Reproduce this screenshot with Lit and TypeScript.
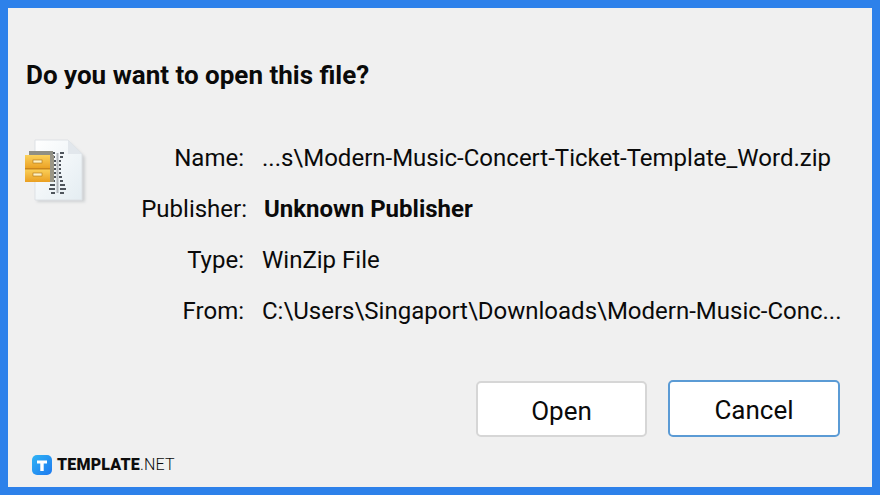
import { LitElement, html, css } from "lit";
import { customElement } from "lit/decorators.js";

@customElement("app-root")
export class AppRoot extends LitElement {
  static styles = css`
    :host { display: block; width: 880px; height: 495px; box-sizing: border-box; border: 8px solid #2d81ea; background: #f0f0f0; font-family: Roboto, "Liberation Sans", sans-serif; color: #0a0a0a; overflow: hidden; }
    .dialog { height: 479px; display: flex; flex-direction: column; padding: 53px 32px 0 18px; box-sizing: border-box; position: relative; }
    h1 { margin: 0; font-size: 26px; line-height: 28px; font-weight: 700; color: #0a0a0a; }
    .body { display: flex; margin-top: 43px; }
    .icon { width: 64px; height: 70px; flex: none; margin-top: 5px; margin-left: -2px; }
    .rows { display: grid; grid-template-columns: 155px auto; column-gap: 18px; grid-template-rows: 50px 51px 51px 51px; font-size: 24px; line-height: 28px; align-items: center; margin-left: 1px; margin-top: 1px; }
    .label { text-align: right; white-space: nowrap; }
    .label.pub { margin-right: -3px; }
    .value { white-space: nowrap; }
    .value.pub { font-weight: 700; margin-left: 2px; }
    .buttons { display: flex; justify-content: flex-end; gap: 21px; margin-top: 44px; }
    button { width: 172px; height: 57px; background: #fff; border: 2px solid #d6d6d6; border-radius: 5px; font: inherit; font-size: 26px; color: #0a0a0a; padding: 4px 0 0 0; }
    button.open { width: 171px; height: 56px; margin-top: 1px; }
    button.cancel { border-color: #5b9bd5; padding: 3px 0 0 0; }
    .brand { position: absolute; left: 24px; bottom: 12px; display: flex; align-items: center; gap: 5px; font-size: 16px; line-height: 20px; letter-spacing: 0.2px; }
    .brand b { font-weight: 900; color: #0d0d0d; }
    .brand span { font-weight: 300; }
    .brand svg { width: 20px; height: 20px; }
  `;

  render() {
    return html`<div class="dialog">
      <h1>Do you want to open this file?</h1>
      <div class="body">
        <svg class="icon" viewBox="0 0 64 70">
          <defs>
            <linearGradient id="pg" x1="0" y1="0" x2="1" y2="1"><stop offset="0" stop-color="#ffffff"/><stop offset="1" stop-color="#e4edf2"/></linearGradient>
            <linearGradient id="dr" x1="0" y1="0" x2="0" y2="1"><stop offset="0" stop-color="#fbd15a"/><stop offset="1" stop-color="#ea9f22"/></linearGradient>
            <filter id="bl"><feGaussianBlur stdDeviation="1.8"/></filter>
            <filter id="s"><feGaussianBlur stdDeviation="0.6"/></filter>
          </defs>
          <path d="M13 6 L46 6 L61 20 L61 65 L13 65 Z" fill="#9aa0a6" opacity=".4" filter="url(#bl)"/>
          <g filter="url(#s)">
            <path d="M11 3 L44 3 L58 17 L58 63 L11 63 Z" fill="url(#pg)" stroke="#dde1e5" stroke-width="1"/>
            <path d="M44 3 L44 17 L58 17 Z" fill="#e2e7ec"/>
            <g fill="none" stroke="#4f555b" stroke-width="1.8">
              <path d="M27 16 h4 M36 16 h4 M28 20 h3 M36 20 h3 M30 24 h2 M35 24 h2 M30 28 h2 M35 28 h2 M30 32 h2 M35 32 h2 M30 36 h2 M35 36 h2 M29 40 h3 M35 40 h3 M28 44 h3 M36 44 h3 M26 48 h5 M36 48 h5 M25 52 h6 M36 52 h6 M27 56 h4 M36 56 h4"/>
            </g>
            <path d="M33.5 16 V56" stroke="#b0b5ba" stroke-width="2" fill="none"/>
            <rect x="5" y="14" width="24" height="4" fill="#8f8f84"/>
            <rect x="26" y="18" width="4" height="27" fill="#9a9687"/>
            <rect x="1" y="18" width="25" height="14" fill="url(#dr)"/>
            <rect x="1" y="32" width="25" height="13" fill="url(#dr)"/>
            <rect x="1" y="31" width="25" height="1.5" fill="#c9841a"/>
            <rect x="9" y="23" width="9" height="3" fill="#fff2c2" stroke="#a8701a" stroke-width=".6"/>
            <rect x="9" y="36" width="9" height="3" fill="#fff2c2" stroke="#a8701a" stroke-width=".6"/>
          </g>
        </svg>
        <div class="rows">
          <div class="label">Name:</div><div class="value">...s\\Modern-Music-Concert-Ticket-Template_Word.zip</div>
          <div class="label pub">Publisher:</div><div class="value pub">Unknown Publisher</div>
          <div class="label">Type:</div><div class="value">WinZip File</div>
          <div class="label">From:</div><div class="value">C:\\Users\\Singaport\\Downloads\\Modern-Music-Conc...</div>
        </div>
      </div>
      <div class="buttons">
        <button class="open">Open</button>
        <button class="cancel">Cancel</button>
      </div>
      <div class="brand">
        <svg viewBox="0 0 20 20"><defs><linearGradient id="lg" x1="0" y1="0" x2="1" y2="1"><stop offset="0" stop-color="#2fb4f5"/><stop offset="1" stop-color="#1d78ef"/></linearGradient></defs><rect width="20" height="20" rx="5" fill="url(#lg)"/><path d="M5 5.5 H15 V8.5 H11.7 V16 H8.3 V8.5 H5 Z" fill="#fff"/></svg>
        <div><b>TEMPLATE</b><span>.NET</span></div>
      </div>
    </div>`;
  }
}
